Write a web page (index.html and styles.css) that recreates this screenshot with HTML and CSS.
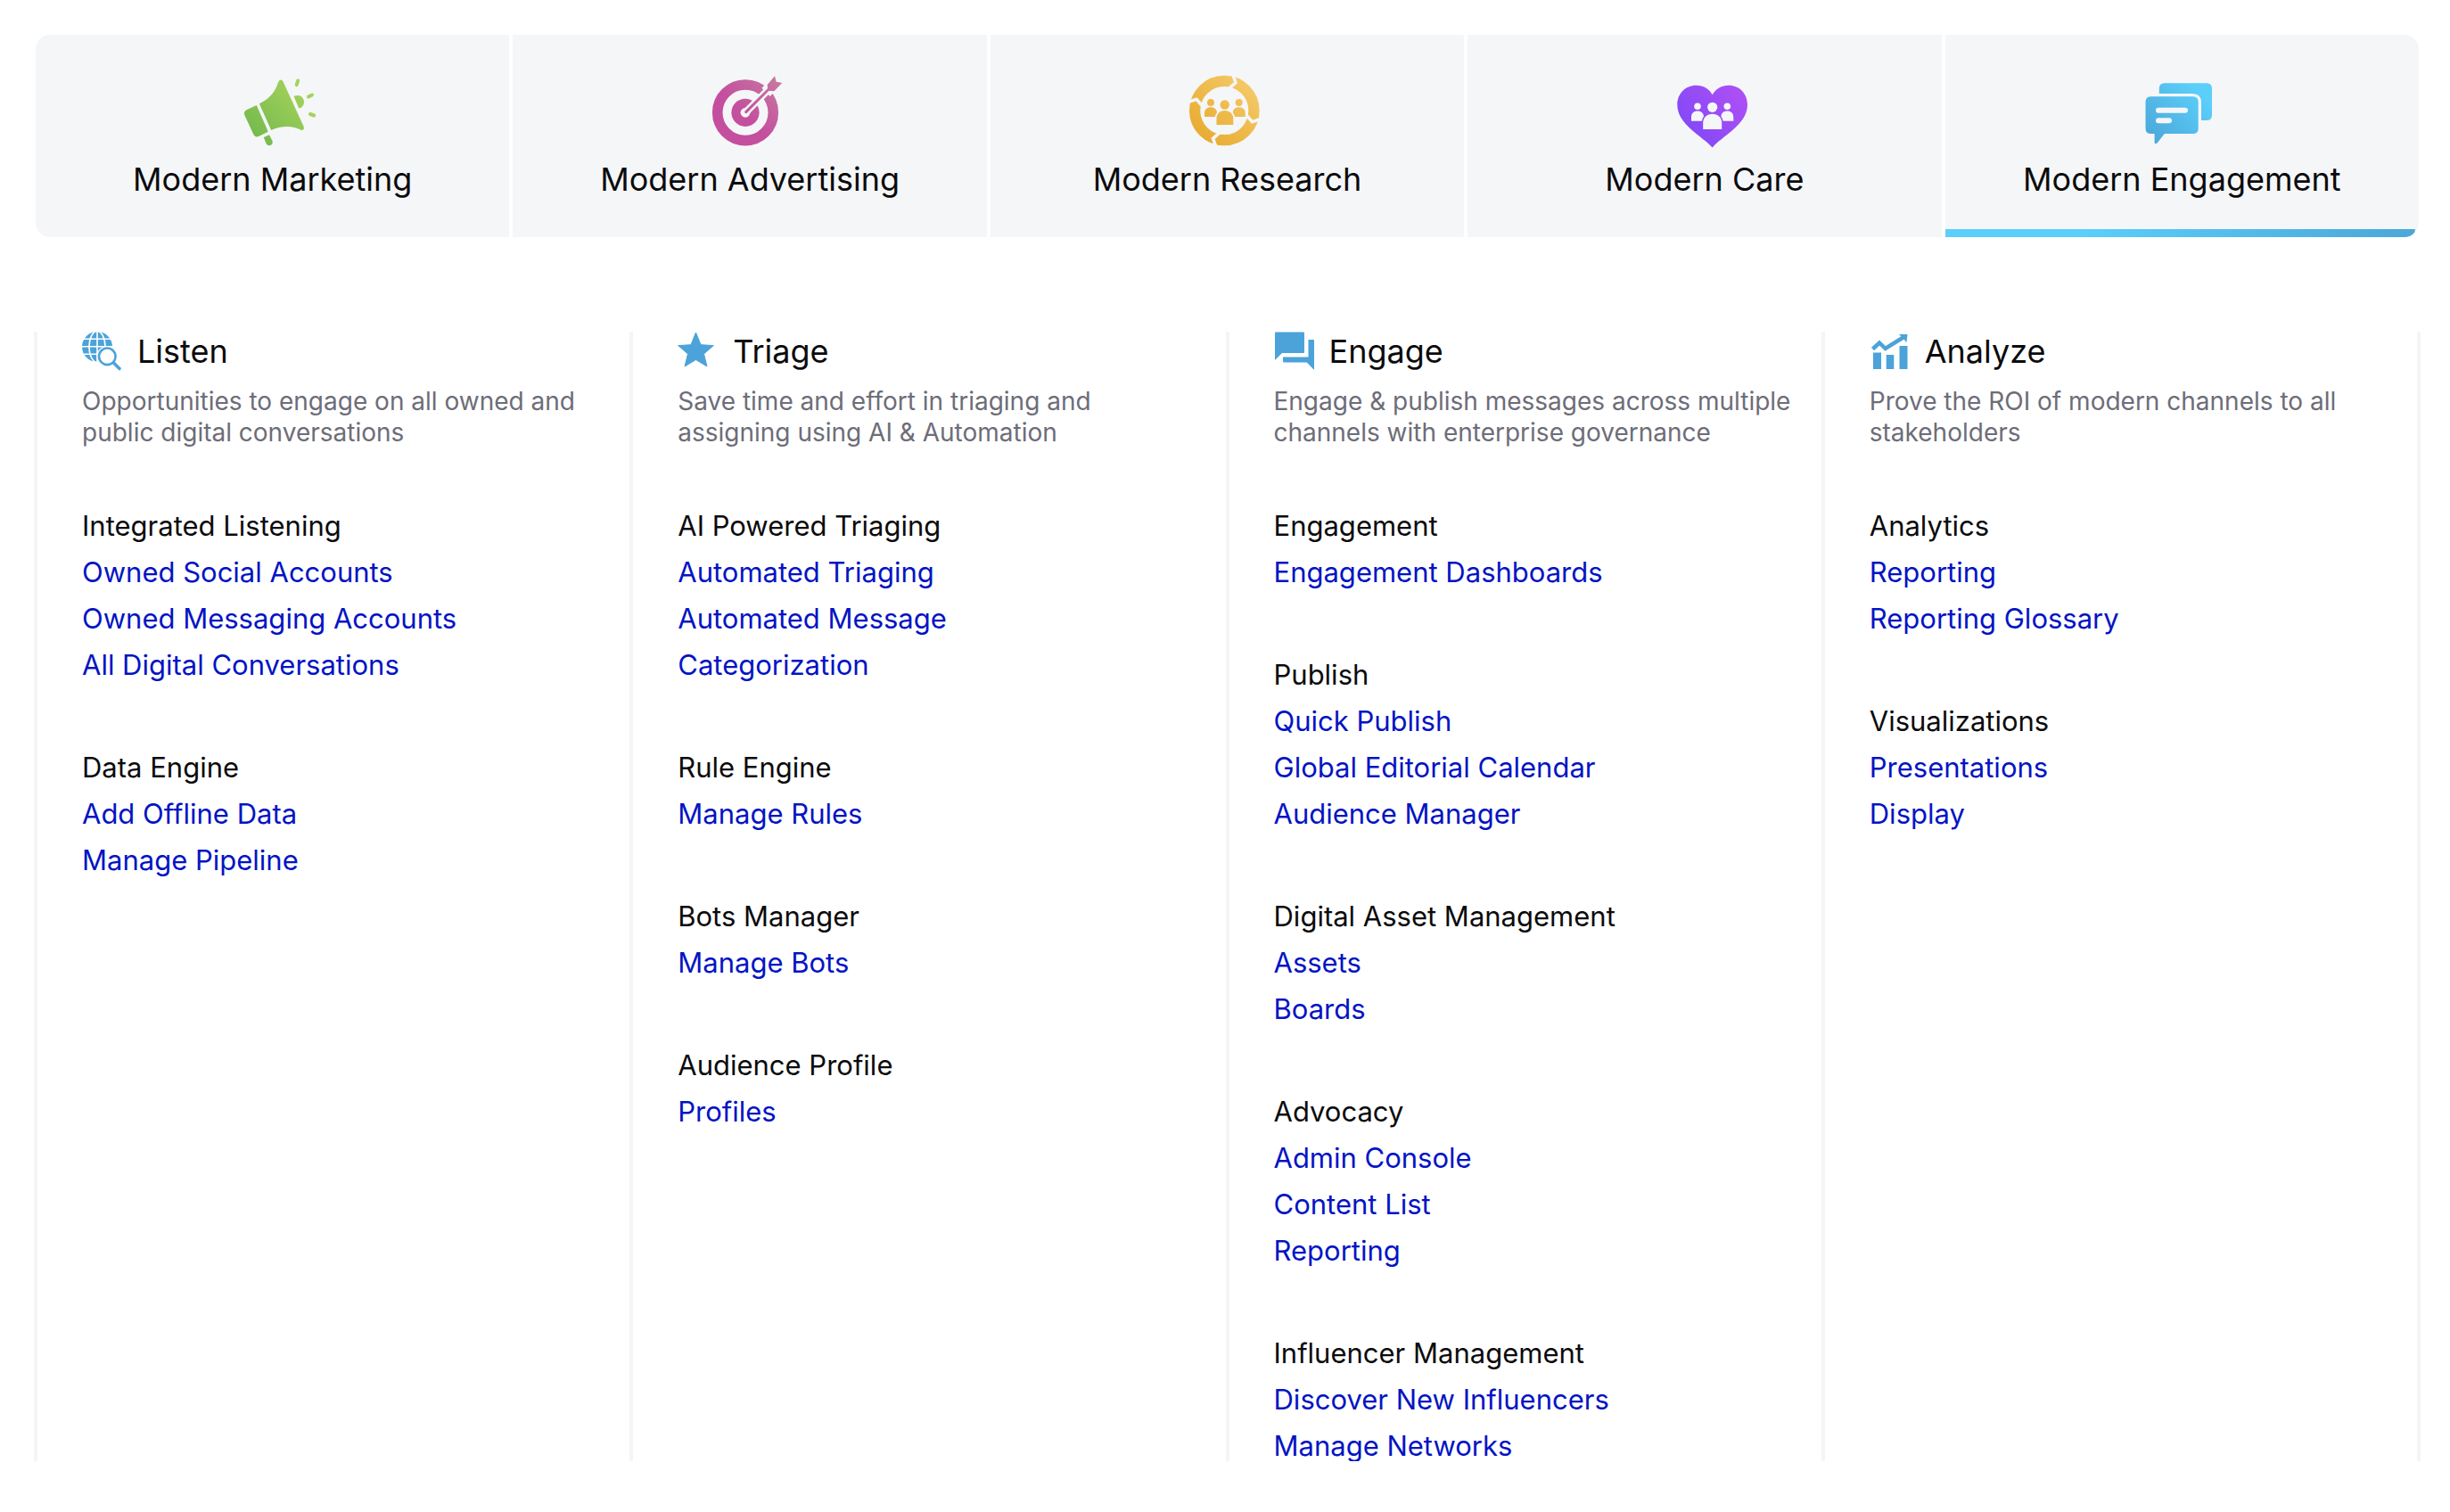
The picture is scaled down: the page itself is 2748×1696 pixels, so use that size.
FILE: index.html
```html
<!DOCTYPE html>
<html lang="en">
<head>
    <meta charset="UTF-8">
    <meta name="viewport" content="width=device-width, initial-scale=1.0">
    <title>Modern Engagement</title>
    <link rel="stylesheet" href="styles.css">
</head>
<body>
    <nav class="tabs">
        <button type="button" class="tab">
            <svg class="tab-icon" viewBox="0 -2 104 80">
                <defs>
                    <linearGradient id="green" x1="20" y1="70" x2="90" y2="5" gradientUnits="userSpaceOnUse">
                        <stop offset="0" stop-color="#6fb74c"/>
                        <stop offset="1" stop-color="#aad55c"/>
                    </linearGradient>
                </defs>
                <g fill="url(#green)">
                    <path d="M36.8 30.3C46 26 54 19 58 6.5Q59 3.5 61 3.5Q63 3.5 64 6.5L86.5 55.5Q88 60 84 60C74 54.5 61 55 50.2 60Z"/>
                    <path d="M33.8 32L23 37Q18.5 39 20.5 43.5L30 64Q32 68.5 36 67L46.8 61.7Z"/>
                    <path d="M41.8 68L48 65.3L51.5 72Q52.5 76.5 48.5 77.2Q46 77.5 44.5 75Z"/>
                    <path d="M75.5 22C83 18.5 87 24 87 28.5C87 32 84.5 35 81.3 35.5Z"/>
                </g>
                <path d="M80.2 4.5L78.7 9.2M92 22.5L96 20.5M94 42L98.2 43.5" fill="none" stroke="#a5d35b" stroke-width="4" stroke-linecap="round"/>
            </svg>
            <span class="tab-label">Modern Marketing</span>
        </button>
        <button type="button" class="tab">
            <svg class="tab-icon" viewBox="0 -2 104 80">
                <defs>
                    <linearGradient id="pink" x1="30" y1="60" x2="85" y2="5" gradientUnits="userSpaceOnUse">
                        <stop offset="0.3" stop-color="#c44f9f"/>
                        <stop offset="1" stop-color="#c6799f"/>
                    </linearGradient>
                </defs>
                <circle cx="47" cy="40.3" r="31.3" fill="none" stroke="url(#pink)" stroke-width="11.6"/>
                <circle cx="47" cy="40.3" r="15.6" fill="url(#pink)"/>
                <circle class="cut-fill" cx="47" cy="40.3" r="5.4"/>
                <path class="cut-line" d="M47 40.3L72 15.3" stroke-width="8"/>
                <path class="cut-line" d="M70 17.3L84 3.3" stroke-width="13"/>
                <path d="M47.7 39.6L74 13.3" fill="none" stroke="url(#pink)" stroke-width="3" stroke-linecap="round"/>
                <path d="M71.7 9L80 -0.7L81.7 5.7L88.3 7L79.3 16.3L72.2 15.8Z" fill="url(#pink)"/>
            </svg>
            <span class="tab-label">Modern Advertising</span>
        </button>
        <button type="button" class="tab">
            <svg class="tab-icon" viewBox="0 -2 104 80">
                <defs>
                    <linearGradient id="gold" x1="22" y1="66" x2="76" y2="10" gradientUnits="userSpaceOnUse">
                        <stop offset="0" stop-color="#e8ac33"/>
                        <stop offset="1" stop-color="#f4c865"/>
                    </linearGradient>
                </defs>
                <circle cx="49.3" cy="38" r="33.2" fill="none" stroke="url(#gold)" stroke-width="12.3"/>
                <g class="cut-line" stroke-width="3.6">
                    <path d="M58.8 -2.5L62 6.7L55 12.8"/>
                    <path d="M58.8 -2.5L62 6.7L55 12.8" transform="rotate(90 49.3 38)"/>
                    <path d="M58.8 -2.5L62 6.7L55 12.8" transform="rotate(180 49.3 38)"/>
                    <path d="M58.8 -2.5L62 6.7L55 12.8" transform="rotate(270 49.3 38)"/>
                </g>
                <g fill="url(#gold)">
                    <circle cx="34" cy="29" r="4"/>
                    <circle cx="65.7" cy="29" r="4"/>
                    <path d="M27 45V41C27 36.5 30 34.3 34 34.3S41 36.5 41 41V45Z"/>
                    <path d="M58.7 45V41C58.7 36.5 61.7 34.3 65.7 34.3S72.7 36.5 72.7 41V45Z"/>
                </g>
                <path class="cut-line cut-fill" d="M40.5 54V47C40.5 41.5 44.5 38 49.7 38S59.3 41.5 59.3 47V54Z" stroke-width="3.6"/>
                <g fill="url(#gold)">
                    <circle cx="49.7" cy="31.5" r="5.2"/>
                    <path d="M40.5 54V47C40.5 41.5 44.5 38 49.7 38S59.3 41.5 59.3 47V54Z"/>
                </g>
            </svg>
            <span class="tab-label">Modern Research</span>
        </button>
        <button type="button" class="tab">
            <svg class="tab-icon" viewBox="0 -2 104 80">
                <defs>
                    <linearGradient id="purple" x1="35" y1="60" x2="88" y2="18" gradientUnits="userSpaceOnUse">
                        <stop offset="0" stop-color="#8549f7"/>
                        <stop offset="1" stop-color="#ab4ff5"/>
                    </linearGradient>
                </defs>
                <path d="M60.7 79.5C50 67 21.3 54 21.3 31.5C21.3 19 30.5 9.7 42.5 9.7C50.5 9.7 57 13.5 60.7 20.3C64.5 13.5 71 9.7 79 9.7C91 9.7 100 19 100 31.5C100 54 71 67 60.7 79.5Z" fill="url(#purple)"/>
                <g class="cut-fill">
                    <circle cx="44" cy="33.3" r="3.8"/>
                    <circle cx="77.3" cy="33.3" r="3.8"/>
                    <path d="M37 49.7V45.5C37 41 40 38.5 44 38.5S51 41 51 45.5V49.7Z"/>
                    <path d="M70.3 49.7V45.5C70.3 41 73.3 38.5 77.3 38.5S84.3 41 84.3 45.5V49.7Z"/>
                </g>
                <path d="M50.2 59V51.5C50.2 45.5 55 41.7 60.7 41.7S71.2 45.5 71.2 51.5V59Z" fill="url(#purple)" stroke="url(#purple)" stroke-width="3"/>
                <g class="cut-fill">
                    <circle cx="60.7" cy="34.3" r="5.6"/>
                    <path d="M50.2 59V51.5C50.2 45.5 55 41.7 60.7 41.7S71.2 45.5 71.2 51.5V59Z"/>
                </g>
            </svg>
            <span class="tab-label">Modern Care</span>
        </button>
        <button type="button" class="tab active">
            <svg class="tab-icon" viewBox="0 -2 104 80">
                <defs>
                    <linearGradient id="blue" x1="15" y1="72" x2="72" y2="18" gradientUnits="userSpaceOnUse">
                        <stop offset="0" stop-color="#4ba7d8"/>
                        <stop offset="1" stop-color="#5bcefa"/>
                    </linearGradient>
                </defs>
                <g fill="url(#blue)">
                    <path d="M26.8 19V13.3Q26.8 7.3 32.8 7.3H80Q86 7.3 86 13.3V43Q86 49 80 49H74V29Q74 19 64 19Z"/>
                    <path d="M17.5 22.3H64.7Q70.7 22.3 70.7 28.3V58Q70.7 64 64.7 64H32.8L24.5 74.5Q21.6 76.5 21.6 73.5V64H17.5Q11.5 64 11.5 58V28.3Q11.5 22.3 17.5 22.3Z"/>
                </g>
                <path class="cut-line" d="M26 37.8H56M26 49.2H38" stroke-width="6" stroke-linecap="round"/>
            </svg>
            <span class="tab-label">Modern Engagement</span>
        </button>
    </nav>

    <main class="columns">
        <section class="column">
            <h2 class="column-title">
                <svg class="column-icon" viewBox="0 0 48 46">
                    <circle cx="17" cy="17" r="17" fill="#4ba3d9"/>
                    <g fill="none" stroke="#fff" stroke-width="1.6">
                        <path d="M17 0V34M0 16.8H34M2 8.3H32M2 25.2H32"/>
                        <ellipse cx="17" cy="17" rx="9" ry="17.5"/>
                    </g>
                    <path d="M36 36L42 42" stroke="#fff" stroke-width="7"/>
                    <circle cx="28.3" cy="27.8" r="9.3" fill="#fff" stroke="#fff" stroke-width="5"/>
                    <circle cx="28.3" cy="27.8" r="9.3" fill="#fff" stroke="#4ba3d9" stroke-width="2.6"/>
                    <path d="M35.5 35L42 41.5" stroke="#4ba3d9" stroke-width="3.6" stroke-linecap="round"/>
                </svg>
                Listen
            </h2>
            <p class="column-desc">Opportunities to engage on all owned and public digital conversations</p>
            <div class="group">
                <h3>Integrated Listening</h3>
                <a href="#">Owned Social Accounts</a>
                <a href="#">Owned Messaging Accounts</a>
                <a href="#">All Digital Conversations</a>
            </div>
            <div class="group">
                <h3>Data Engine</h3>
                <a href="#">Add Offline Data</a>
                <a href="#">Manage Pipeline</a>
            </div>
        </section>

        <section class="column">
            <h2 class="column-title">
                <svg class="column-icon" viewBox="0 0 48 46">
                    <path d="M20.5 1L26 14.7L40.3 15.6L29.5 25L33 39L20.5 31.5L8 39L11.5 25L0.7 15.6L15 14.7Z" fill="#4ba3d9" stroke="#4ba3d9" stroke-linejoin="round"/>
                </svg>
                Triage
            </h2>
            <p class="column-desc">Save time and effort in triaging and assigning using AI &amp; Automation</p>
            <div class="group">
                <h3>AI Powered Triaging</h3>
                <a href="#">Automated Triaging</a>
                <a href="#">Automated Message<br>Categorization</a>
            </div>
            <div class="group">
                <h3>Rule Engine</h3>
                <a href="#">Manage Rules</a>
            </div>
            <div class="group">
                <h3>Bots Manager</h3>
                <a href="#">Manage Bots</a>
            </div>
            <div class="group">
                <h3>Audience Profile</h3>
                <a href="#">Profiles</a>
            </div>
        </section>

        <section class="column">
            <h2 class="column-title">
                <svg class="column-icon" viewBox="0 0 48 46">
                    <path d="M2 0.5H33Q34 0.5 34 1.5V23Q34 24 33 24H9L1 32V1.5Q1 0.5 2 0.5Z" fill="#4ba3d9"/>
                    <path d="M38.5 9H44Q45 9 45 10V43L36.7 34.5H11Q10 34.5 10 33.5V28.5H38.5Z" fill="#4ba3d9"/>
                </svg>
                Engage
            </h2>
            <p class="column-desc">Engage &amp; publish messages across multiple channels with enterprise governance</p>
            <div class="group">
                <h3>Engagement</h3>
                <a href="#">Engagement Dashboards</a>
            </div>
            <div class="group">
                <h3>Publish</h3>
                <a href="#">Quick Publish</a>
                <a href="#">Global Editorial Calendar</a>
                <a href="#">Audience Manager</a>
            </div>
            <div class="group">
                <h3>Digital Asset Management</h3>
                <a href="#">Assets</a>
                <a href="#">Boards</a>
            </div>
            <div class="group">
                <h3>Advocacy</h3>
                <a href="#">Admin Console</a>
                <a href="#">Content List</a>
                <a href="#">Reporting</a>
            </div>
            <div class="group">
                <h3>Influencer Management</h3>
                <a href="#">Discover New Influencers</a>
                <a href="#">Manage Networks</a>
            </div>
        </section>

        <section class="column">
            <h2 class="column-title">
                <svg class="column-icon" viewBox="0 0 48 46">
                    <g fill="#4ba3d9">
                        <rect x="4" y="23.5" width="9" height="18.5"/>
                        <rect x="18.7" y="26" width="8.6" height="16"/>
                        <rect x="33.5" y="16" width="9" height="26"/>
                        <path d="M33 3H42.5L41.5 12Z"/>
                    </g>
                    <path d="M3.5 19.5L11 12.5L17.7 19L38.5 6" fill="none" stroke="#4ba3d9" stroke-width="4.5"/>
                </svg>
                Analyze
            </h2>
            <p class="column-desc">Prove the ROI of modern channels to all stakeholders</p>
            <div class="group">
                <h3>Analytics</h3>
                <a href="#">Reporting</a>
                <a href="#">Reporting Glossary</a>
            </div>
            <div class="group">
                <h3>Visualizations</h3>
                <a href="#">Presentations</a>
                <a href="#">Display</a>
            </div>
        </section>
    </main>
</body>
</html>
```
FILE: styles.css
```css
* {
    box-sizing: border-box;
}

body {
    display: flex;
    flex-direction: column;
    height: 100vh;
    margin: 0;
    padding: 39px 33px 57px 38px;
    background-color: #fff;
    color: #0b0b0d;
    font-family: Inter, "Noto Sans", sans-serif;
}

.tabs {
    display: grid;
    grid-template-columns: repeat(5, 1fr);
    gap: 4px;
    margin: 0 2px 106px;
    border-radius: 16px;
    overflow: hidden;
}

.tab {
    position: relative;
    display: flex;
    flex-direction: column;
    align-items: center;
    gap: 13px;
    padding: 45px 16px 41px;
    border: none;
    background: #f5f6f8;
    color: inherit;
    font-family: inherit;
    font-size: 36px;
    line-height: 48px;
    cursor: pointer;
}

.tab.active::after {
    content: "";
    position: absolute;
    left: 0;
    right: 4px;
    bottom: 0;
    height: 9px;
    border-bottom-right-radius: 9px;
    background: linear-gradient(90deg, #5bcefa 30%, #4ba7d8);
}

.tab-icon {
    width: 104px;
    height: 80px;
    overflow: visible;
}

/* cut-outs take the colour of the tab behind them */
.cut-line {
    fill: none;
    stroke: #f5f6f8;
}

.cut-fill {
    fill: #f5f6f8;
}

.columns {
    display: grid;
    grid-template-columns: repeat(4, 1fr);
    flex: 1;
    min-height: 0;
    border-right: 4px solid #f5f5f6;
    overflow: hidden;
}

.column {
    padding: 0 24px 0 50px;
    border-left: 4px solid #f5f5f6;
}

.column-title {
    display: flex;
    gap: 14px;
    margin: 0 0 15px;
    font-size: 36px;
    font-weight: 400;
    line-height: 45px;
}

.column-icon {
    width: 48px;
    height: 46px;
}

.column-desc {
    margin: 0 0 61px;
    color: #6d6d78;
    font-size: 28px;
    line-height: 35px;
}

.group {
    margin-bottom: 63px;
    font-size: 31px;
    line-height: 52px;
}

.group h3 {
    margin: 0;
    font-size: inherit;
    font-weight: 400;
}

.group a {
    display: block;
    color: #0414c4;
    text-decoration: none;
}

.group a:hover {
    text-decoration: underline;
}
```
